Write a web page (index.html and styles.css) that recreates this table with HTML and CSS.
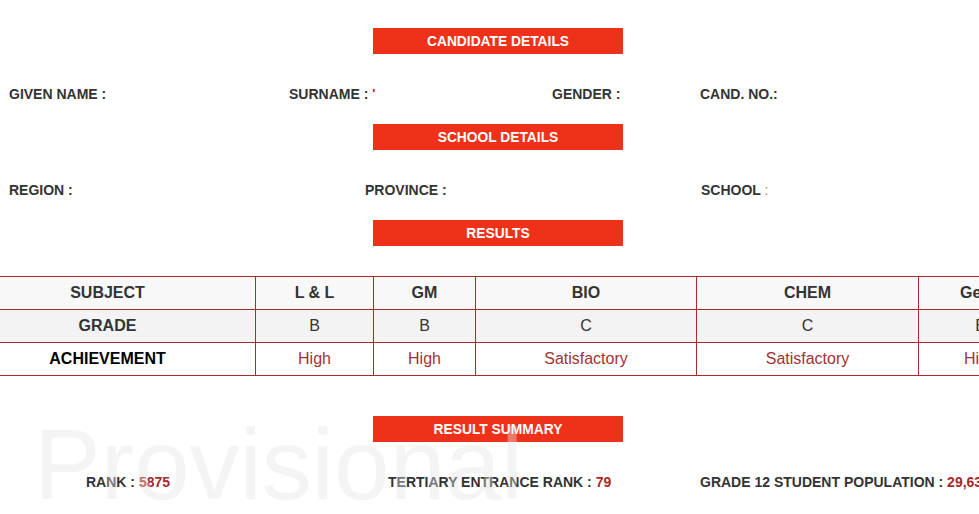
FILE: index.html
```html
<!DOCTYPE html>
<html>
<head>
<meta charset="utf-8">
<link rel="stylesheet" href="styles.css">
</head>
<body>
<div class="page">
  <div class="banner b1">CANDIDATE DETAILS</div>
  <div class="info row1">
    <div class="field">GIVEN NAME :</div>
    <div class="field">SURNAME : <span class="tick">'</span></div>
    <div class="field">GENDER :</div>
    <div class="field">CAND. NO.:</div>
  </div>
  <div class="banner b2">SCHOOL DETAILS</div>
  <div class="info row2">
    <div class="field">REGION :</div>
    <div class="field">PROVINCE :</div>
    <div class="field">SCHOOL <span class="orange">:</span></div>
  </div>
  <div class="banner b3">RESULTS</div>
  <div class="table-wrap">
    <table class="results">
      <colgroup>
        <col class="c-subj"><col class="c-ll"><col class="c-gm"><col class="c-bio"><col class="c-chem"><col class="c-geo">
      </colgroup>
      <tr class="head">
        <td>SUBJECT</td><td>L &amp; L</td><td>GM</td><td>BIO</td><td>CHEM</td><td>Geog</td>
      </tr>
      <tr class="grade">
        <td class="lbl">GRADE</td><td>B</td><td>B</td><td>C</td><td>C</td><td>B</td>
      </tr>
      <tr class="ach">
        <td class="lbl">ACHIEVEMENT</td><td>High</td><td>High</td><td>Satisfactory</td><td>Satisfactory</td><td>High</td>
      </tr>
    </table>
  </div>
  <div class="banner b4">RESULT SUMMARY</div>
  <div class="info summary">
    <div class="field">RANK : <span class="num">5875</span></div>
    <div class="field">TERTIARY ENTRANCE RANK : <span class="num">79</span></div>
    <div class="field">GRADE 12 STUDENT POPULATION : <span class="num">29,634</span></div>
  </div>
  <div class="watermark">Provisional</div>
</div>
</body>
</html>
```
FILE: styles.css
```css
html, body {
  margin: 0;
  padding: 0;
  background: #fff;
  overflow: hidden;
}
body {
  font-family: "Liberation Sans", Arial, sans-serif;
  color: #333;
}
.page {
  position: relative;
  width: 996px;
  height: 514px;
  padding-top: 28px;
  box-sizing: border-box;
}
.banner {
  width: 250px;
  height: 26px;
  margin-left: 373px;
  background: #f0311a;
  color: #fff;
  font-weight: bold;
  font-size: 13.8px;
  line-height: 28px;
  text-align: center;
  overflow: hidden;
}
.info {
  display: grid;
  font-size: 14px;
  font-weight: bold;
  color: #333;
  line-height: 16px;
  height: 16px;
}
.row1 {
  grid-template-columns: 280px 263px 148px 1fr;
  padding-left: 9px;
  margin: 32px 0 22px;
}
.row2 {
  grid-template-columns: 356px 336px 1fr;
  padding-left: 9px;
  margin: 32px 0 22px;
}
.summary {
  grid-template-columns: 302px 312px 1fr;
  padding-left: 86px;
  margin-top: 32px;
  white-space: nowrap;
}
.tick {
  color: #d81010;
  font-size: 13px;
  font-weight: bold;
  position: relative;
  top: -1px;
}
.orange {
  color: #d07a2a;
  font-weight: normal;
}
.num {
  color: #a32a2a;
}
.table-wrap {
  margin-top: 30px;
  margin-left: -41px;
  width: 1100px;
}
.results {
  border-collapse: collapse;
  table-layout: fixed;
  width: 1083px;
  font-size: 16px;
}
.c-subj { width: 296px; }
.c-ll { width: 118px; }
.c-gm { width: 102px; }
.c-bio { width: 221px; }
.c-chem { width: 222px; }
.c-geo { width: 124px; }
.results td {
  border: 1px solid #ad2a2a;
  height: 32px;
  padding: 0;
  text-align: center;
  vertical-align: middle;
  line-height: 32px;
  white-space: nowrap;
  overflow: hidden;
}
.head td {
  background: #f8f8f8;
  font-weight: bold;
  color: #333;
}
.grade td {
  background: #f3f3f3;
  color: #333;
}
.grade .lbl {
  font-weight: bold;
}
.ach td {
  background: #fff;
  color: #a33232;
}
.ach .lbl {
  color: #000;
  font-weight: bold;
}
.b4 {
  margin-top: 40px;
}
.watermark {
  position: absolute;
  left: 34px;
  top: 407px;
  font-size: 100px;
  line-height: 114px;
  color: rgba(228, 228, 228, 0.4);
  pointer-events: none;
  white-space: nowrap;
}
```
